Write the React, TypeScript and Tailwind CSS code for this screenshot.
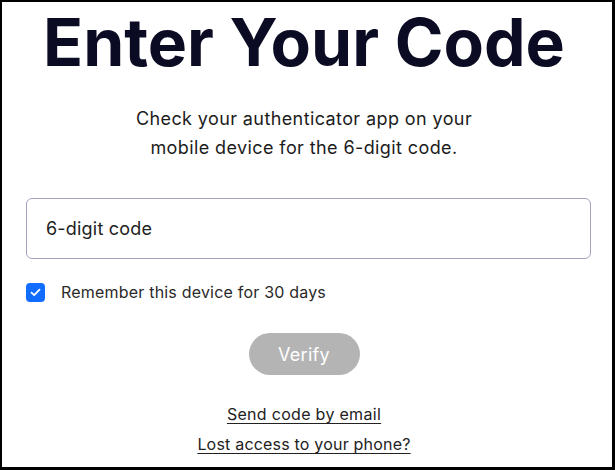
export default function App() {
  return (
    <div
      className="w-[615px] h-[470px] bg-white border-l-2 border-t-2 border-r-[3px] border-b-[3px] border-black text-[#1f1f1f] overflow-hidden"
      style={{ fontFamily: "Inter, 'Noto Sans', sans-serif" }}
    >
      <div className="flex flex-col items-center pr-[6px]">
        <h1 className="text-[66px] leading-[80px] font-bold text-[#0b0c24] tracking-[0px]">
          Enter Your Code
        </h1>
        <p className="mt-[22px] text-[18px] leading-[29px] tracking-[0.4px] text-center text-[#1c1c1c]">
          Check your authenticator app on your
          <br />
          mobile device for the 6-digit code.
        </p>

        <input
          type="text"
          placeholder="6-digit code"
          className="self-start ml-[24px] mt-[36px] w-[565px] h-[61px] rounded-[6px] border border-[#a3a3bd] pl-[19px] text-[18px] tracking-[0.2px] text-[#222] placeholder:text-[#222] outline-none"
        />

        <label className="self-start ml-[24px] mt-[21px] flex items-center gap-[16px]">
          <span className="w-[19px] h-[19px] rounded-[4px] bg-[#116dff] flex items-center justify-center">
            <svg width="11" height="9" viewBox="0 0 11 9" fill="none">
              <path d="M1.5 4.6 L4.2 7.2 L9.5 1.6" stroke="white" strokeWidth="1.8" strokeLinecap="round" strokeLinejoin="round" />
            </svg>
          </span>
          <span className="text-[16px] tracking-[0.2px] text-[#2a2a2a]">Remember this device for 30 days</span>
        </label>

        <button className="mt-[29px] w-[111px] h-[42px] rounded-full bg-[#b4b4b4] text-white text-[18px] tracking-[0.3px]">
          Verify
        </button>

        <a className="mt-[24px] text-[16px] leading-[30px] tracking-[0.3px] text-[#222] underline underline-offset-[3px]">
          Send code by email
        </a>
        <a className="text-[16px] leading-[30px] tracking-[0.2px] text-[#222] underline underline-offset-[3px]">
          Lost access to your phone?
        </a>
      </div>
    </div>
  );
}
